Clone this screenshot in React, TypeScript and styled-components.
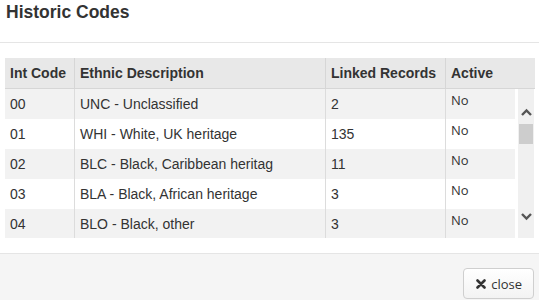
import styled, { createGlobalStyle } from "styled-components";

const GlobalStyle = createGlobalStyle`
    html, body {
        margin: 0;
        padding: 0;
        background: #fff;
    }
    body {
        font-family: "Liberation Sans", Arial, sans-serif;
        color: #333;
    }
`;

const Modal = styled.div`
    width: 539px;
    height: 300px;
    display: flex;
    flex-direction: column;
    background: #fff;
    overflow: hidden;
`;

const Header = styled.div`
    height: 43px;
    border-bottom: 1px solid #e5e5e5;
    padding: 2px 6px 0;
    box-sizing: border-box;
`;

const Title = styled.h4`
    margin: 0;
    font-size: 17.5px;
    font-weight: bold;
    line-height: 20px;
    color: #333;
`;

const Body = styled.div`
    flex: 1;
    padding: 15px 4px 0 5px;
`;

const HeadRow = styled.div`
    display: grid;
    grid-template-columns: 69px 251px 120px 90px;
    height: 30px;
    background: #e8e8e8;
    border-bottom: 1px solid #d6d6d6;
`;

const HeadCell = styled.div<{ $first?: boolean }>`
    display: flex;
    align-items: center;
    padding-left: 5px;
    border-left: ${(p) => (p.$first ? "none" : "1px solid #d6d6d6")};
    font-size: 14px;
    font-weight: bold;
    color: #333;
`;

const Scroller = styled.div`
    display: flex;
    height: 149px;
`;

const Rows = styled.div`
    width: 510px;
    overflow: hidden;
`;

const Row = styled.div<{ $striped: boolean }>`
    display: grid;
    grid-template-columns: 69px 251px 120px 70px;
    height: 30px;
    background: ${(p) => (p.$striped ? "#f2f2f2" : "#fff")};
`;

const Cell = styled.div<{ $first?: boolean }>`
    display: flex;
    align-items: center;
    padding-left: 5px;
    border-left: ${(p) => (p.$first ? "none" : "1px solid #dcdcdc")};
    font-size: 14px;
    color: #333;
    white-space: nowrap;
`;

const ActiveCell = styled.div`
    padding: 2px 0 0 5px;
    border-left: 1px solid #dcdcdc;
    font-family: "Open Sans", "Liberation Sans", sans-serif;
    font-size: 13px;
    line-height: 18px;
    color: #333;
`;

const ScrollTrack = styled.div`
    width: 16px;
    margin-left: 3px;
    background: #f0f0f0;
    display: flex;
    flex-direction: column;
    align-items: center;
`;

const Arrow = styled.svg`
    display: block;
    width: 11px;
    height: 8px;
    margin: 19px 0 8px;
`;

const Thumb = styled.div`
    width: 14px;
    height: 20px;
    background: #cdcdcd;
`;

const DownArrow = styled(Arrow)`
    margin: auto 0 17px;
`;

const Footer = styled.div`
    height: 47px;
    box-sizing: border-box;
    border-top: 1px solid #e5e5e5;
    background: #f5f5f5;
    display: flex;
    justify-content: flex-end;
    align-items: flex-start;
    padding: 14px 5px 0 0;
`;

const Button = styled.button`
    display: flex;
    align-items: center;
    gap: 5px;
    height: 31px;
    padding: 0 11px 0 12px;
    border: 1px solid #cfcfcf;
    border-radius: 4px;
    background: linear-gradient(#ffffff, #f3f3f3);
    font-family: "Open Sans", "Liberation Sans", sans-serif;
    font-size: 13px;
    color: #333;
    cursor: pointer;
`;

const rows = [
    { code: "00", desc: "UNC - Unclassified", linked: "2" },
    { code: "01", desc: "WHI - White, UK heritage", linked: "135" },
    { code: "02", desc: "BLC - Black, Caribbean heritag", linked: "11" },
    { code: "03", desc: "BLA - Black, African heritage", linked: "3" },
    { code: "04", desc: "BLO - Black, other", linked: "3" },
];

export default function App() {
    return (
        <>
            <GlobalStyle />
            <Modal>
                <Header>
                    <Title>Historic Codes</Title>
                </Header>
                <Body>
                    <HeadRow>
                        <HeadCell $first>Int Code</HeadCell>
                        <HeadCell>Ethnic Description</HeadCell>
                        <HeadCell>Linked Records</HeadCell>
                        <HeadCell>Active</HeadCell>
                    </HeadRow>
                    <Scroller>
                        <Rows>
                            {rows.map((r, i) => (
                                <Row key={r.code} $striped={i % 2 === 0}>
                                    <Cell $first>{r.code}</Cell>
                                    <Cell>{r.desc}</Cell>
                                    <Cell>{r.linked}</Cell>
                                    <ActiveCell>No</ActiveCell>
                                </Row>
                            ))}
                        </Rows>
                        <ScrollTrack>
                            <Arrow viewBox="0 0 11 8">
                                <path d="M1 7 L5.5 2.5 L10 7" fill="none" stroke="#555" strokeWidth="2.4" />
                            </Arrow>
                            <Thumb />
                            <DownArrow viewBox="0 0 11 8">
                                <path d="M1 1 L5.5 5.5 L10 1" fill="none" stroke="#555" strokeWidth="2.4" />
                            </DownArrow>
                        </ScrollTrack>
                    </Scroller>
                </Body>
                <Footer>
                    <Button>
                        <svg width="10" height="10" viewBox="0 0 10 10">
                            <path d="M1.5 1.5 L8.5 8.5 M8.5 1.5 L1.5 8.5" stroke="#333" strokeWidth="2.6" strokeLinecap="round" />
                        </svg>
                        close
                    </Button>
                </Footer>
            </Modal>
        </>
    );
}
